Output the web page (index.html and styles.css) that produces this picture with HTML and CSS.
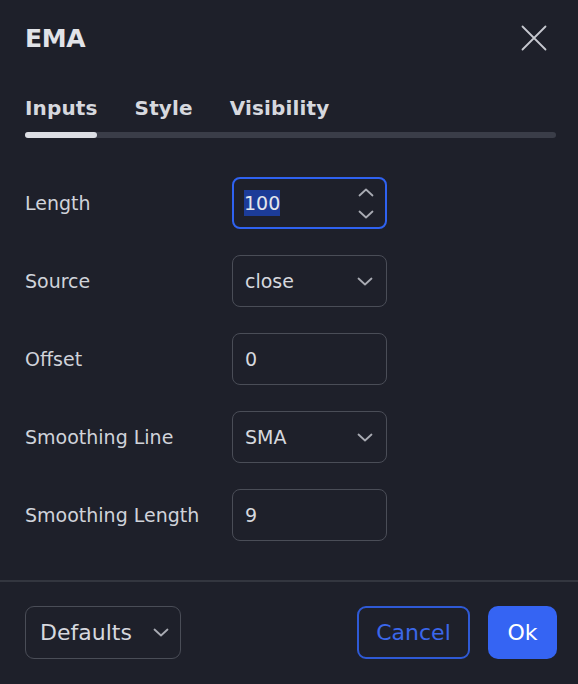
FILE: index.html
```html
<!DOCTYPE html>
<html>
<head>
<meta charset="utf-8">
<link rel="stylesheet" href="styles.css">
</head>
<body>
<div class="dialog">
  <div class="header">
    <div class="title">EMA</div>
    <button class="close" aria-label="Close">
      <svg width="26" height="26" viewBox="0 0 26 26"><path d="M1.5 1.5 L24.5 24.5 M24.5 1.5 L1.5 24.5" stroke="#c6c8cf" stroke-width="1.8" fill="none" stroke-linecap="round"/></svg>
    </button>
  </div>
  <div class="tabs">
    <span class="tab active">Inputs</span>
    <span class="tab">Style</span>
    <span class="tab">Visibility</span>
  </div>
  <div class="track"><div class="track-active"></div></div>

  <div class="rows">
    <div class="row">
      <div class="label">Length</div>
      <div class="field focused">
        <span class="value"><span class="sel">100</span></span>
        <span class="spin">
          <svg width="16" height="9" viewBox="0 0 16 9"><path d="M1.5 7.5 L8 1.5 L14.5 7.5" stroke="#a9abb3" stroke-width="1.8" fill="none" stroke-linecap="round" stroke-linejoin="round"/></svg>
          <svg width="16" height="9" viewBox="0 0 16 9"><path d="M1.5 1.5 L8 7.5 L14.5 1.5" stroke="#a9abb3" stroke-width="1.8" fill="none" stroke-linecap="round" stroke-linejoin="round"/></svg>
        </span>
      </div>
    </div>
    <div class="row">
      <div class="label">Source</div>
      <div class="field">
        <span class="value">close</span>
        <svg class="chev" width="16" height="9" viewBox="0 0 16 9"><path d="M1.5 1.5 L8 7.5 L14.5 1.5" stroke="#a9abb3" stroke-width="1.8" fill="none" stroke-linecap="round" stroke-linejoin="round"/></svg>
      </div>
    </div>
    <div class="row">
      <div class="label">Offset</div>
      <div class="field">
        <span class="value">0</span>
      </div>
    </div>
    <div class="row">
      <div class="label">Smoothing Line</div>
      <div class="field">
        <span class="value">SMA</span>
        <svg class="chev" width="16" height="9" viewBox="0 0 16 9"><path d="M1.5 1.5 L8 7.5 L14.5 1.5" stroke="#a9abb3" stroke-width="1.8" fill="none" stroke-linecap="round" stroke-linejoin="round"/></svg>
      </div>
    </div>
    <div class="row">
      <div class="label">Smoothing Length</div>
      <div class="field">
        <span class="value">9</span>
      </div>
    </div>
  </div>

  <div class="separator"></div>

  <div class="footer">
    <button class="btn defaults">Defaults
      <svg class="chev-small" width="16" height="9" viewBox="0 0 16 9"><path d="M1.5 1.5 L8 7.5 L14.5 1.5" stroke="#a9abb3" stroke-width="1.8" fill="none" stroke-linecap="round" stroke-linejoin="round"/></svg>
    </button>
    <div class="actions">
      <button class="btn cancel">Cancel</button>
      <button class="btn ok">Ok</button>
    </div>
  </div>
</div>
</body>
</html>
```
FILE: styles.css
```css
html, body {
  margin: 0;
  padding: 0;
  background: #1e202a;
}
body {
  font-family: "DejaVu Sans", Verdana, sans-serif;
  color: #d2d4db;
  width: 578px;
  height: 684px;
  overflow: hidden;
}
.dialog {
  display: flex;
  flex-direction: column;
  padding: 0 21px 0 25px;
}
.header {
  display: flex;
  justify-content: space-between;
  align-items: center;
  padding-top: 23px;
  height: 32px;
}
.title {
  font-size: 25px;
  font-weight: bold;
  line-height: 32px;
  color: #e1e3e8;
  letter-spacing: -0.3px;
}
.close {
  background: none;
  border: none;
  padding: 0;
  margin-right: 10px;
  margin-top: -3px;
  width: 26px;
  height: 26px;
  display: flex;
}
.tabs {
  display: flex;
  gap: 37px;
  margin-top: 41px;
  font-size: 20px;
  font-weight: bold;
  line-height: 24px;
  color: #d6d8de;
}
.tab {
  letter-spacing: 0.15px;
}
.track {
  margin-top: 12px;
  height: 6px;
  border-radius: 3px;
  background: #3a3d48;
  margin-right: 1px;
}
.track-active {
  width: 72px;
  height: 6px;
  border-radius: 3px;
  background: #dcdee4;
}
.rows {
  display: flex;
  flex-direction: column;
  gap: 26px;
  margin-top: 39px;
}
.row {
  display: flex;
  align-items: center;
  height: 52px;
}
.label {
  width: 207px;
  font-size: 19px;
  color: #d0d3da;
}
.field {
  box-sizing: border-box;
  width: 155px;
  height: 52px;
  border: 1px solid #4a4d57;
  border-radius: 8px;
  display: flex;
  align-items: center;
  justify-content: space-between;
  padding: 0 12px 0 12px;
  font-size: 19px;
  color: #d6d8de;
}
.field.focused {
  border: 2px solid #2f62f0;
  padding: 0 11px 0 10px;
}
.sel {
  background: #1c3c98;
  color: #e4e6ec;
  padding: 2px 0;
}
.spin {
  display: flex;
  flex-direction: column;
  gap: 13px;
}
.spin svg, .chev, .chev-small {
  display: block;
}
.chev {
  margin-right: 1px;
}
.separator {
  height: 2px;
  background: #33363f;
  margin: 39px -21px 0 -25px;
}
.footer {
  display: flex;
  justify-content: space-between;
  margin-top: 24px;
}
.btn {
  font-family: "DejaVu Sans", Verdana, sans-serif;
  font-size: 22px;
  height: 53px;
  box-sizing: border-box;
  border-radius: 9px;
  background: none;
  display: flex;
  align-items: center;
  padding: 0;
}
.defaults {
  width: 156px;
  border: 1px solid #4a4d57;
  color: #d6d8de;
  padding-left: 14px;
  gap: 21px;
}
.actions {
  display: flex;
  gap: 18px;
}
.cancel {
  width: 113px;
  border: 2px solid #2f5ad6;
  color: #3b67ea;
  justify-content: center;
}
.ok {
  width: 69px;
  border: none;
  background: #3564f3;
  color: #ffffff;
  justify-content: center;
  border-radius: 10px;
}
```
